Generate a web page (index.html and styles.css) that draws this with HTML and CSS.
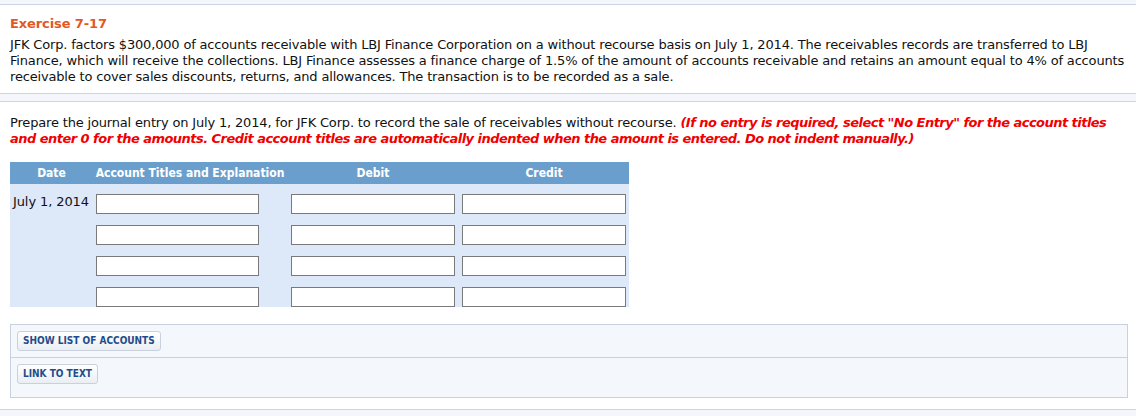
FILE: index.html
```html
<!DOCTYPE html>
<html>
<head>
<meta charset="utf-8">
<link rel="stylesheet" href="styles.css">
</head>
<body>
<div class="band band-top"></div>
<section class="question">
  <h1 class="title">Exercise 7-17</h1>
  <p class="text">JFK Corp. factors $300,000 of accounts receivable with LBJ Finance Corporation on a without recourse basis on July 1, 2014. The receivables records are transferred to LBJ Finance, which will receive the collections. LBJ Finance assesses a finance charge of 1.5% of the amount of accounts receivable and retains an amount equal to 4% of accounts receivable to cover sales discounts, returns, and allowances. The transaction is to be recorded as a sale.</p>
</section>
<div class="band band-mid"></div>
<section class="part">
  <p class="text">Prepare the journal entry on July 1, 2014, for JFK Corp. to record the sale of receivables without recourse. <em class="note">(If no entry is required, select "No Entry" for the account titles and enter 0 for the amounts. Credit account titles are automatically indented when the amount is entered. Do not indent manually.)</em></p>

  <div class="journal">
    <div class="jhead">
      <div class="h-date">Date</div>
      <div class="h-acct">Account Titles and Explanation</div>
      <div class="h-debit">Debit</div>
      <div class="h-credit">Credit</div>
    </div>
    <div class="jbody">
      <div class="cell-date">July 1, 2014</div>
      <div class="cell"><input class="inp inp-acct" type="text"></div>
      <div class="cell"><input class="inp" type="text"></div>
      <div class="cell"><input class="inp" type="text"></div>

      <div class="cell-date"></div>
      <div class="cell"><input class="inp inp-acct" type="text"></div>
      <div class="cell"><input class="inp" type="text"></div>
      <div class="cell"><input class="inp" type="text"></div>

      <div class="cell-date"></div>
      <div class="cell"><input class="inp inp-acct" type="text"></div>
      <div class="cell"><input class="inp" type="text"></div>
      <div class="cell"><input class="inp" type="text"></div>

      <div class="cell-date"></div>
      <div class="cell"><input class="inp inp-acct" type="text"></div>
      <div class="cell"><input class="inp" type="text"></div>
      <div class="cell"><input class="inp" type="text"></div>
    </div>
  </div>

  <div class="tools">
    <div class="tool-row"><button class="btn" type="button">SHOW LIST OF ACCOUNTS</button></div>
    <div class="tool-row tool-last"><button class="btn" type="button">LINK TO TEXT</button></div>
  </div>
</section>
<div class="band band-bottom"></div>
</body>
</html>
```

FILE: styles.css
```css
html, body {
  margin: 0;
  padding: 0;
  background: #ffffff;
}
body {
  width: 1136px;
  height: 416px;
  overflow: hidden;
  font-family: "DejaVu Sans", Verdana, sans-serif;
  font-size: 13px;
  line-height: 16px;
  color: #111111;
}
.band {
  background: #f3f6fa;
}
.band-top {
  height: 4px;
  border-bottom: 1px solid #cdd5e1;
}
.band-mid {
  height: 7px;
  border-top: 1px solid #cdd5e1;
  border-bottom: 1px solid #cdd5e1;
}
.band-bottom {
  height: 8px;
  border-top: 1px solid #cdd5e1;
}
.question {
  padding: 11px 10px 8px 10px;
}
.title {
  margin: 0 0 5px 0;
  font-size: 13px;
  line-height: 16px;
  font-weight: bold;
  color: #e4581f;
  letter-spacing: -0.1px;
}
.text {
  margin: 0;
  letter-spacing: -0.17px;
}
.part {
  padding: 13px 8px 11px 10px;
}
.note {
  color: #f00000;
  font-weight: bold;
  font-style: italic;
  letter-spacing: -0.53px;
}
.journal {
  width: 619px;
  margin-top: 15px;
}
.jhead {
  display: grid;
  grid-template-columns: 83px 194px 172px 170px;
  height: 22px;
  align-items: center;
  background: #6a9fcd;
  color: #ffffff;
  font-family: "DejaVu Sans Condensed", "DejaVu Sans", sans-serif;
  font-weight: bold;
  font-size: 12px;
  text-align: center;
}
.jbody {
  display: grid;
  grid-template-columns: 86px 195px 171px 167px;
  row-gap: 11px;
  padding-top: 10px;
  background: #dde8f8;
}
.cell-date {
  padding-left: 3px;
  white-space: nowrap;
  letter-spacing: -0.1px;
}
.cell {
  display: flex;
}
.inp {
  box-sizing: border-box;
  width: 164px;
  height: 20px;
  margin: 0;
  padding: 0 3px;
  border: 1px solid #7a7a7a;
  background: #ffffff;
  font: inherit;
}
.inp-acct {
  width: 163px;
}
.tools {
  margin-top: 17px;
  border: 1px solid #c9d1de;
  background: #f4f7fb;
}
.tool-row {
  padding: 6px 6px 6px 6px;
  border-bottom: 1px solid #c9d1de;
}
.tool-row.tool-last {
  border-bottom: none;
  padding-bottom: 13px;
}
.btn {
  height: 20px;
  margin: 0;
  padding: 0 5px;
  border: 1px solid #c9d1de;
  border-radius: 3px;
  background: linear-gradient(#ffffff, #eaeef3);
  color: #1f4c8b;
  font-family: "DejaVu Sans Condensed", "DejaVu Sans", sans-serif;
  font-size: 10px;
  font-weight: bold;
  line-height: 18px;
}
```
